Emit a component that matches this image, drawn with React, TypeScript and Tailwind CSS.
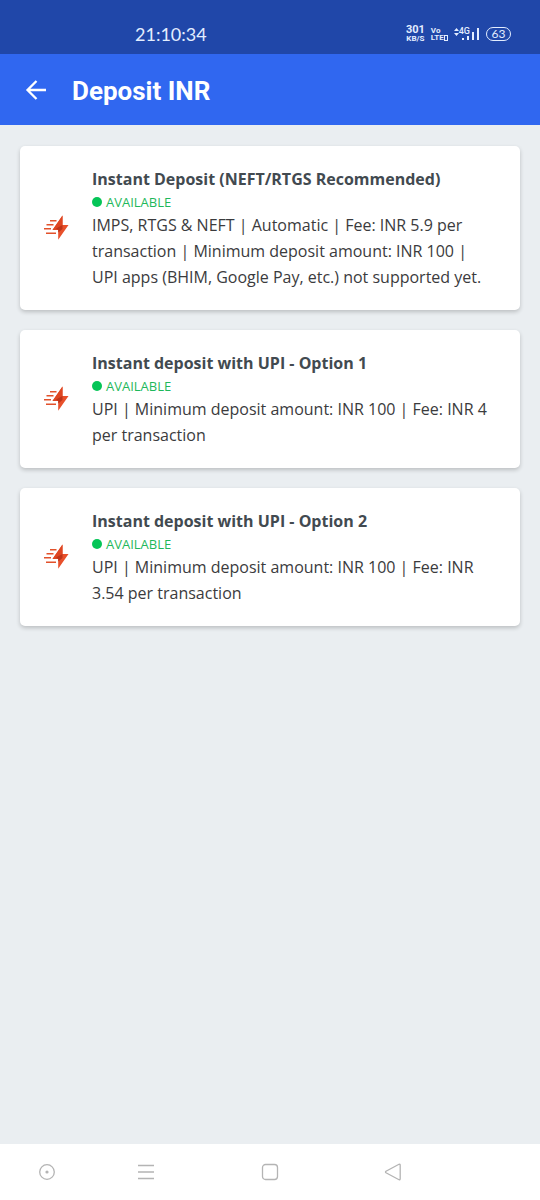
type Option = {
  title: string;
  lines: string[];
};

const options: Option[] = [
  {
    title: "Instant Deposit (NEFT/RTGS Recommended)",
    lines: [
      "IMPS, RTGS & NEFT | Automatic | Fee: INR 5.9 per",
      "transaction | Minimum deposit amount: INR 100 |",
      "UPI apps (BHIM, Google Pay, etc.) not supported yet.",
    ],
  },
  {
    title: "Instant deposit with UPI - Option 1",
    lines: ["UPI | Minimum deposit amount: INR 100 | Fee: INR 4", "per transaction"],
  },
  {
    title: "Instant deposit with UPI - Option 2",
    lines: ["UPI | Minimum deposit amount: INR 100 | Fee: INR", "3.54 per transaction"],
  },
];

function BoltIcon() {
  return (
    <svg className="h-7 w-7 shrink-0" viewBox="0 0 28 28" fill="none" aria-hidden="true">
      <path d="M8 6.7h6.5M4.5 10.8h7M2 14.8h7M4 19.2h10" stroke="#e2512b" strokeWidth="1.6" />
      <path d="M20.5 1.5 10.5 16h5.7v9.7L26.5 11h-6z" fill="#e8502b" />
      <path d="M20.5 1.5 10.5 16h5.7l4.3-5z" fill="#de4622" />
      <path d="m14 14.5 6.5-3.5v4l-4.3 3.5V16z" fill="#bd3419" />
    </svg>
  );
}

function StatusBar() {
  return (
    <div className="flex h-[54px] items-center justify-between bg-[#2047a9] pt-3.5 pr-[29px] pl-[25%] font-['Lato'] text-[#e3edff]">
      <span className="text-lg leading-6">21:10:34</span>
      <div className="flex items-center gap-1.5">
        <div className="text-center font-['Roboto'] font-bold">
          <div className="text-[11px] leading-[10px]">301</div>
          <div className="text-[8px] leading-2">KB/S</div>
        </div>
        <div className="font-['Roboto'] text-[8px] leading-[7px] font-bold">
          <div>Vo</div>
          <div className="flex items-center">
            LTE
            <span className="h-1.5 w-1 border border-current" />
          </div>
        </div>
        <div className="flex items-center">
          <svg className="h-4 w-[5px]" viewBox="0 0 5 16" fill="currentColor">
            <path d="M0 5 2.5 2 5 5zM0 7h5L2.5 10z" />
          </svg>
          <span className="self-start font-['Roboto'] text-[9px] leading-[11px] font-medium">4G</span>
          <svg className="-ml-2 h-4 w-[18px]" viewBox="0 0 18 16" fill="currentColor">
            <path d="M0 12h2v2H0zM5 10h2v4H5zM10 6h2v8h-2zM15 2h2v12h-2z" />
          </svg>
        </div>
        <span className="flex h-3.5 w-[25px] items-center justify-center rounded-full border border-current text-xs">
          63
        </span>
      </div>
    </div>
  );
}

function OptionCard({ title, lines }: Option) {
  return (
    <button
      type="button"
      className="flex w-full items-center gap-[22px] rounded-[5px] bg-white py-5 pr-4 pl-[22px] text-left shadow-[0_2px_4px_rgba(0,0,0,0.2)]"
    >
      <BoltIcon />
      <div className="min-w-0 flex-1 text-base text-[#3b3b3d]">
        <h2 className="leading-[26px] font-bold text-[#424a50]">{title}</h2>
        <div className="flex items-center gap-1 text-[13px] leading-5 text-[#1fb85c]">
          <span className="h-2.5 w-2.5 rounded-full bg-[#05c557]" />
          AVAILABLE
        </div>
        <p className="leading-[26px]">
          {lines.map((line) => (
            <span key={line} className="block">
              {line}
            </span>
          ))}
        </p>
      </div>
    </button>
  );
}

function NavBar() {
  const stroke = { fill: "none", stroke: "#b4b4b4", strokeWidth: 1.3 };
  return (
    <nav className="grid h-14 grid-cols-[93fr_105fr_144fr_102fr_96fr] items-center justify-items-center bg-white">
      <button type="button" aria-label="Assistive">
        <svg className="h-5 w-5" viewBox="0 0 20 20" {...stroke}>
          <circle cx="10" cy="10" r="7.3" />
          <circle cx="10" cy="10" r="1.6" fill="#b4b4b4" stroke="none" />
        </svg>
      </button>
      <button type="button" aria-label="Menu">
        <svg className="h-5 w-5" viewBox="0 0 20 20" {...stroke}>
          <path d="M2 3.5h16M2 10h16M2 16.5h16" />
        </svg>
      </button>
      <button type="button" aria-label="Home">
        <svg className="h-5 w-5" viewBox="0 0 20 20" {...stroke}>
          <rect x="2.5" y="2.5" width="15" height="15" rx="3" />
        </svg>
      </button>
      <button type="button" aria-label="Back">
        <svg className="h-5 w-5" viewBox="0 0 20 20" {...stroke}>
          <path d="M16 2.3 3 9.2q-1 .8 0 1.6l13 6.9q1.2.3 1.2-.9V3.2q0-1.2-1.2-.9z" />
        </svg>
      </button>
    </nav>
  );
}

export default function App() {
  return (
    <div className="flex min-h-screen flex-col bg-[#eaeef1] font-['Open_Sans',sans-serif]">
      <StatusBar />
      <header className="flex h-[71px] items-center gap-6 bg-[#3067f0] px-6 text-white">
        <button type="button" aria-label="Go back">
          <svg className="h-6 w-6" viewBox="0 0 24 24" fill="none" stroke="currentColor" strokeWidth="2.3">
            <path d="M22 12H3.5M12.5 3l-9 9 9 9" />
          </svg>
        </button>
        <h1 className="pt-0.5 font-['Roboto'] text-[26px] leading-8 font-bold">Deposit INR</h1>
      </header>
      <main className="flex flex-1 flex-col gap-5 px-5 pt-[21px] pb-5">
        {options.map((option) => (
          <OptionCard key={option.title} {...option} />
        ))}
      </main>
      <NavBar />
    </div>
  );
}
